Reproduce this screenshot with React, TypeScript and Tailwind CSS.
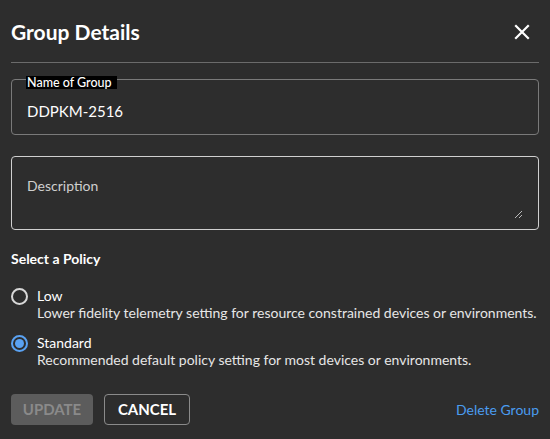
import React from "react";

export default function App() {
  return (
    <div className="w-[550px] h-[439px] bg-[#2d2d2d] text-white px-[11px] flex flex-col" style={{ fontFamily: "Lato, 'Noto Sans', sans-serif" }}>
      <div className="flex items-center justify-between h-[62px] pt-[1px]">
        <h1 className="text-[21px] font-bold leading-none">Group Details</h1>
        <svg width="16" height="16" viewBox="0 0 16 16" className="mr-[9px]">
          <path d="M2 2 L14 14 M14 2 L2 14" stroke="#fff" strokeWidth="2.2" strokeLinecap="square" />
        </svg>
      </div>
      <div className="h-px bg-[#6b6b6b]" />
      <div className="relative mt-[16px] h-[56px] border border-[#7a7a7a] rounded-[4px] flex items-center pl-[15px] pt-[9px]">
        <span className="absolute left-[14px] top-[-4px] bg-black pl-[1px] pr-[5px] text-[12.5px] leading-[13px] font-medium">Name of Group</span>
        <span className="text-[15px]">DDPKM-2516</span>
      </div>
      <div className="relative mt-[21px] h-[74px] border border-[#cfcfcf] rounded-[4px] pl-[15px] pt-[16px]">
        <span className="text-[14px] text-[#cfcfcf]">Description</span>
        <svg width="10" height="10" viewBox="0 0 10 10" className="absolute right-[15px] bottom-[10px]">
          <path d="M2 9 L9 2 M6 9 L9 6" stroke="#bbb" strokeWidth="1" />
        </svg>
      </div>
      <div className="mt-[20px] text-[14px] font-bold leading-[17px]">Select a Policy</div>
      <div className="mt-[20px] flex gap-[9px]">
        <div className="mt-[1px] w-[17px] h-[17px] rounded-full border-2 border-[#d8d8d8] shrink-0" />
        <div className="text-[14px] leading-[17px]">
          <div>Low</div>
          <div className="text-[#e6e6e6]">Lower fidelity telemetry setting for resource constrained devices or environments.</div>
        </div>
      </div>
      <div className="mt-[13px] flex gap-[9px]">
        <div className="mt-[1px] w-[17px] h-[17px] rounded-full border-2 border-[#5aa2f2] shrink-0 flex items-center justify-center">
          <div className="w-[9px] h-[9px] rounded-full bg-[#5aa2f2]" />
        </div>
        <div className="text-[14px] leading-[17px]">
          <div>Standard</div>
          <div className="text-[#e6e6e6]">Recommended default policy setting for most devices or environments.</div>
        </div>
      </div>
      <div className="mt-[26px] flex items-center">
        <button className="w-[82px] h-[31px] rounded-[4px] bg-[#5c5c5c] text-[#8a8a8a] text-[15px] font-bold">UPDATE</button>
        <button className="ml-[11px] w-[86px] h-[31px] rounded-[4px] border border-[#8a8a8a] text-white text-[15px] font-bold">CANCEL</button>
        <span className="ml-auto text-[14px] text-[#4a9cf0]">Delete Group</span>
      </div>
    </div>
  );
}
